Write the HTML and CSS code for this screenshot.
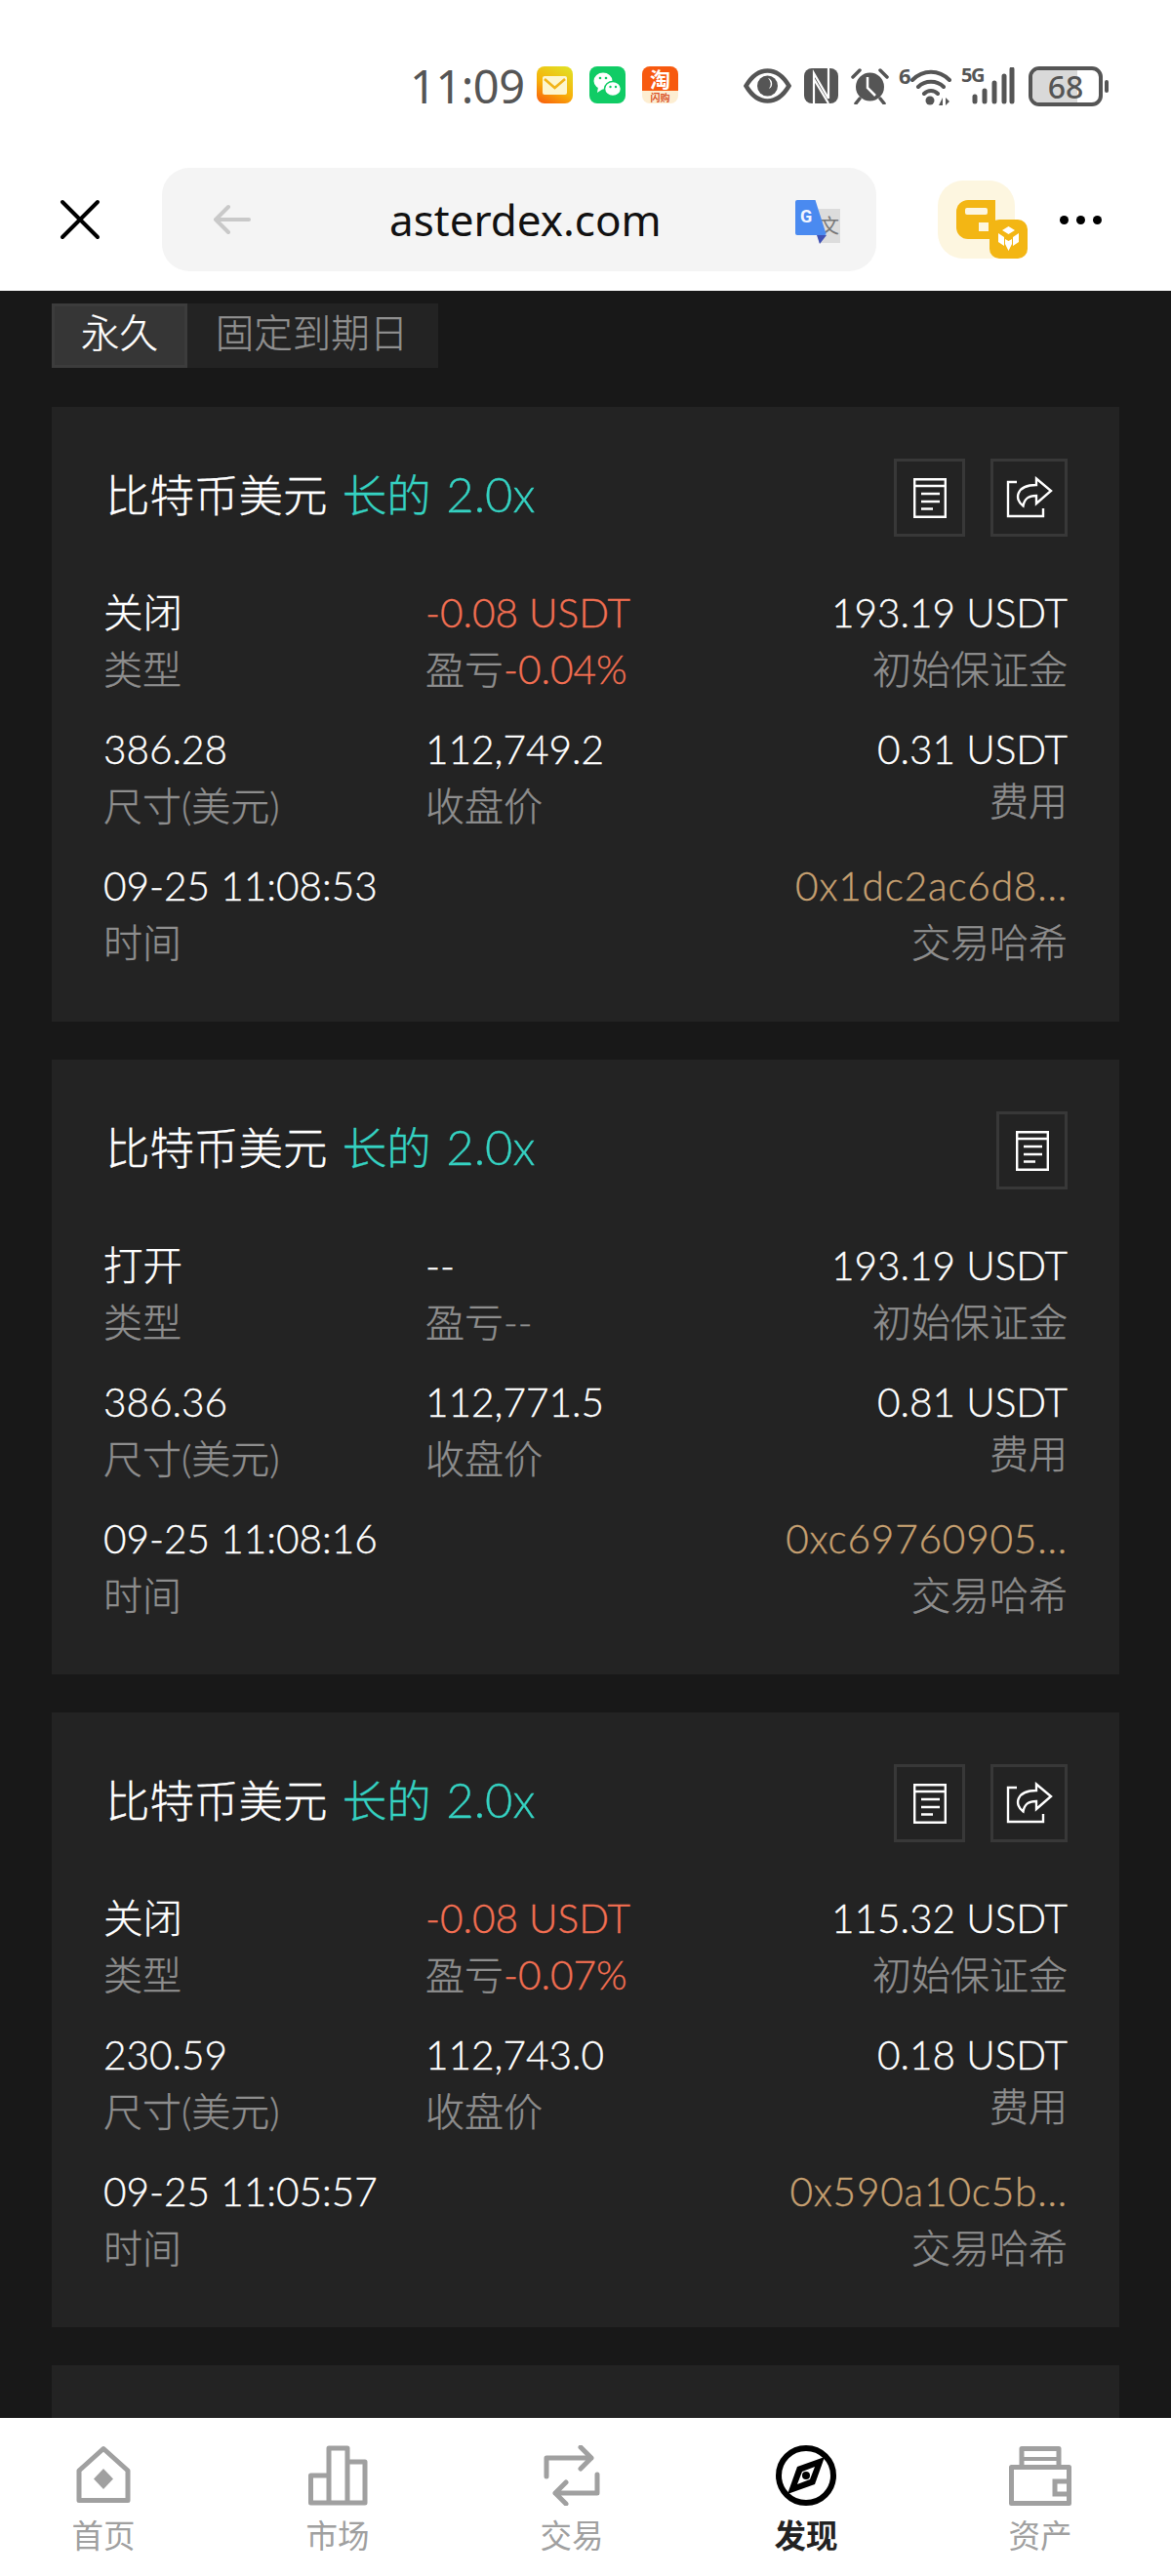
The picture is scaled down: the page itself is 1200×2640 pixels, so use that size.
FILE: index.html
```html
<!DOCTYPE html>
<html lang="zh">
<head>
<meta charset="utf-8">
<title>asterdex.com</title>
<link rel="stylesheet" href="styles.css">
</head>
<body>
<svg class="defs" width="0" height="0" aria-hidden="true">
  <symbol id="doc" viewBox="0 0 34 41">
    <path d="M1.2 1.2H32.8V39.8H1.2ZM1.2 8H32.8M8 16H27M8 24H27M8 31.5H20" fill="none" stroke="#fff" stroke-width="2.4"/>
  </symbol>
  <symbol id="share" viewBox="0 0 50 45">
    <path d="M12 6H3V41H39V33" fill="none" stroke="#fff" stroke-width="2.4"/>
    <path d="M32 2.5L47 15L32 28V20C25 20 20 22 18.5 30.5C9 24 11 9 32 9Z" fill="none" stroke="#fff" stroke-width="2.4" stroke-linejoin="miter"/>
  </symbol>
</svg>
<div class="app">
  <header class="chrome">
    <div class="status">
      <span class="clock">11:09</span>
      <div class="notifs">
        <svg class="notif" viewBox="0 0 37 38"><defs><linearGradient id="mailg" x1="0.7" y1="0" x2="0.2" y2="1"><stop offset="0" stop-color="#e3dc22"/><stop offset="0.55" stop-color="#f7b20a"/><stop offset="1" stop-color="#f9660c"/></linearGradient></defs><rect width="37" height="38" rx="8" fill="url(#mailg)"/><rect x="6" y="10" width="25" height="19" rx="2" fill="#fdf6cf"/><path d="M8 13L18.5 22L29 13" fill="none" stroke="#f1b41a" stroke-width="2.6"/></svg>
        <svg class="notif" viewBox="0 0 37 38"><rect width="37" height="38" rx="8" fill="#10cc65"/><ellipse cx="14" cy="15" rx="9.5" ry="8.5" fill="#fff"/><path d="M9 21L8 27L14 23Z" fill="#fff"/><ellipse cx="24" cy="23" rx="8.5" ry="7.5" fill="#fff" stroke="#10cc65" stroke-width="1.5"/><circle cx="11" cy="12" r="1.3" fill="#10cc65"/><circle cx="17" cy="12" r="1.3" fill="#10cc65"/><circle cx="21.500" cy="21" r="1.2" fill="#10cc65"/><circle cx="27" cy="21" r="1.2" fill="#10cc65"/></svg>
        <div class="taobao"><span class="tb-main">淘</span><span class="tb-sub">闪购</span></div>
      </div>
      <div class="sys">
        <svg class="sys-eye" viewBox="0 0 49 36"><path d="M2.500 18C9 7 16 2.500 24.500 2.500S40 7 46.500 18C40 29 33 33.500 24.500 33.500S9 29 2.500 18Z" fill="none" stroke="#555" stroke-width="4.500"/><circle cx="24.500" cy="18" r="10.500" fill="#555"/><path d="M25 10a6 6 0 0 1 1 11a8 8 0 0 0-1-11Z" fill="#fff"/></svg>
        <svg class="sys-nfc" viewBox="0 0 35 38"><rect y="1" width="35" height="36" rx="8" fill="#555"/><path d="M10 37V6L25 32M10 12L25 37M25 1V32" fill="none" stroke="#fff" stroke-width="2.200"/></svg>
        <svg class="sys-alarm" viewBox="0 0 39 38"><circle cx="19.500" cy="20" r="14.500" fill="#555"/><path d="M2 10L9 3M37 10L30 3M9 32L5 37M30 32L34 37" stroke="#555" stroke-width="3.500" stroke-linecap="round"/><path d="M17 10V21L25 29" fill="none" stroke="#fff" stroke-width="2.500"/></svg>
        <div class="wifi"><span class="wifi-num">6</span><svg class="wifi-svg" viewBox="0 0 42 38"><path d="M2 12C13 1 29 1 40 12M8 19C15 12 27 12 34 19M14 26C18 22 24 22 28 26" fill="none" stroke="#555" stroke-width="4" stroke-linecap="round"/><circle cx="20" cy="33" r="4.500" fill="#555"/><path d="M29 38L33 30V38ZM36 30L40 34L36 38Z" fill="#555"/></svg></div>
        <div class="signal"><span class="sig-label">5G</span><svg class="sig-svg" viewBox="0 0 46 38"><path d="M4 30V35M14 24V35M24 16V35M34 9V35M42 2V35" stroke="#555" stroke-width="5" stroke-linecap="round" transform="translate(-1 0)"/></svg></div>
        <div class="battery"><span class="bat-fill"></span><span class="bat-num">68</span></div>
        <span class="bat-nub"></span>
      </div>
    </div>
    <div class="toolbar">
      <svg class="close" viewBox="0 0 42 42"><path d="M3 3L39 39M39 3L3 39" stroke="#000" stroke-width="4" stroke-linecap="round"/></svg>
      <div class="urlbar">
        <svg class="back" viewBox="0 0 40 32"><path d="M37 16H3M16 3L3 16L16 29" fill="none" stroke="#c9c9c9" stroke-width="4" stroke-linecap="round" stroke-linejoin="round"/></svg>
        <span class="url">asterdex.com</span>
        <div class="gtrans">
          <span class="gt-back">文</span>
          <span class="gt-front">G</span>
          <span class="gt-fold"></span>
        </div>
      </div>
      <div class="miniapp">
        <svg class="mini-svg" viewBox="0 0 41 40"><path d="M12 0H40V40H12A12 12 0 0 1 0 28V12A12 12 0 0 1 12 0Z" fill="#f3b614"/><rect x="9" y="8" width="23" height="7" rx="2" fill="#fdf6e0"/><rect x="23" y="23" width="10" height="9" fill="#fdf6e0"/></svg>
        <svg class="mini-badge" viewBox="0 0 39 40"><rect width="39" height="40" rx="10" fill="#f3b614"/><path d="M19.500 7L26 11L19.500 15L13 11ZM9 14L15 18V27L9 23ZM30 14L24 18V27L30 23ZM16 20L19.500 22L23 20V25L19.500 32L16 25Z" fill="#fff"/></svg>
      </div>
      <div class="dots"><span class="dot"></span><span class="dot"></span><span class="dot"></span></div>
    </div>
  </header>

  <main class="content">
    <div class="tabs">
      <span class="tab tab-active">永久</span>
      <span class="tab tab-idle">固定到期日</span>
    </div>

    <article class="card">
      <div class="card-head">
        <h2 class="title">比特币美元 <span class="long">长的 <span class="lev">2.0x</span></span></h2>
        <div class="actions">
          <span class="btn"><svg class="ico-doc"><use href="#doc"/></svg></span>
          <span class="btn btn-share"><svg class="ico-share"><use href="#share"/></svg></span>
        </div>
      </div>
      <div class="grid">
        <div class="cell"><div class="val">关闭</div><div class="lab">类型</div></div>
        <div class="cell"><div class="val neg">-0.08 USDT</div><div class="lab">盈亏<span class="neg">-0.04%</span></div></div>
        <div class="cell end"><div class="val">193.19 USDT</div><div class="lab">初始保证金</div></div>
        <div class="cell"><div class="val">386.28</div><div class="lab">尺寸(美元)</div></div>
        <div class="cell"><div class="val">112,749.2</div><div class="lab">收盘价</div></div>
        <div class="cell end"><div class="val">0.31 USDT</div><div class="lab lab-tight">费用</div></div>
        <div class="cell"><div class="val">09-25 11:08:53</div><div class="lab">时间</div></div>
        <div class="cell"></div>
        <div class="cell end"><div class="val hash">0x1dc2ac6d8...</div><div class="lab">交易哈希</div></div>
      </div>
    </article>

    <article class="card">
      <div class="card-head">
        <h2 class="title">比特币美元 <span class="long">长的 <span class="lev">2.0x</span></span></h2>
        <div class="actions">
          <span class="btn"><svg class="ico-doc"><use href="#doc"/></svg></span>
        </div>
      </div>
      <div class="grid">
        <div class="cell"><div class="val">打开</div><div class="lab">类型</div></div>
        <div class="cell"><div class="val">--</div><div class="lab">盈亏--</div></div>
        <div class="cell end"><div class="val">193.19 USDT</div><div class="lab">初始保证金</div></div>
        <div class="cell"><div class="val">386.36</div><div class="lab">尺寸(美元)</div></div>
        <div class="cell"><div class="val">112,771.5</div><div class="lab">收盘价</div></div>
        <div class="cell end"><div class="val">0.81 USDT</div><div class="lab lab-tight">费用</div></div>
        <div class="cell"><div class="val">09-25 11:08:16</div><div class="lab">时间</div></div>
        <div class="cell"></div>
        <div class="cell end"><div class="val hash">0xc69760905...</div><div class="lab">交易哈希</div></div>
      </div>
    </article>

    <article class="card">
      <div class="card-head">
        <h2 class="title">比特币美元 <span class="long">长的 <span class="lev">2.0x</span></span></h2>
        <div class="actions">
          <span class="btn"><svg class="ico-doc"><use href="#doc"/></svg></span>
          <span class="btn btn-share"><svg class="ico-share"><use href="#share"/></svg></span>
        </div>
      </div>
      <div class="grid">
        <div class="cell"><div class="val">关闭</div><div class="lab">类型</div></div>
        <div class="cell"><div class="val neg">-0.08 USDT</div><div class="lab">盈亏<span class="neg">-0.07%</span></div></div>
        <div class="cell end"><div class="val">115.32 USDT</div><div class="lab">初始保证金</div></div>
        <div class="cell"><div class="val">230.59</div><div class="lab">尺寸(美元)</div></div>
        <div class="cell"><div class="val">112,743.0</div><div class="lab">收盘价</div></div>
        <div class="cell end"><div class="val">0.18 USDT</div><div class="lab lab-tight">费用</div></div>
        <div class="cell"><div class="val">09-25 11:05:57</div><div class="lab">时间</div></div>
        <div class="cell"></div>
        <div class="cell end"><div class="val hash">0x590a10c5b...</div><div class="lab">交易哈希</div></div>
      </div>
    </article>

    <article class="card card-empty"></article>
  </main>

  <nav class="nav">
    <div class="nav-item">
      <svg class="nav-ico" viewBox="0 0 64 62"><path d="M32 3.500L57 26V56.500H7V26Z" fill="none" stroke="#a0a0a0" stroke-width="5" stroke-linejoin="round"/><path d="M32 24L42 34.500L32 45L22 34.500Z" fill="#a0a0a0"/></svg>
      <span class="nav-lab">首页</span>
    </div>
    <div class="nav-item">
      <svg class="nav-ico" viewBox="0 0 64 62"><path d="M4.500 59V31H23V3H42V17H60V59ZM23 31V59M42 17V59" fill="none" stroke="#a0a0a0" stroke-width="5" stroke-linejoin="round"/></svg>
      <span class="nav-lab">市场</span>
    </div>
    <div class="nav-item">
      <svg class="nav-ico" viewBox="0 0 64 62"><path d="M6 33V14H52M41 3L52 14L41 25M58 31V50H15M26 39L15 50L26 61" fill="none" stroke="#a0a0a0" stroke-width="5" stroke-linecap="round" stroke-linejoin="round" transform="translate(0 -1)"/></svg>
      <span class="nav-lab">交易</span>
    </div>
    <div class="nav-item">
      <svg class="nav-ico" viewBox="0 0 64 62"><circle cx="32" cy="31" r="28" fill="none" stroke="#000" stroke-width="6"/><path d="M51 12L41 40L13 50L23 22Z" fill="#000"/><path d="M41 22L36 35L23 40L28 27Z" fill="#fff"/><circle cx="32" cy="31" r="4" fill="#000"/></svg>
      <span class="nav-lab nav-lab-on">发现</span>
    </div>
    <div class="nav-item">
      <svg class="nav-ico" viewBox="0 0 64 62"><path d="M13 21V3.500H51V21" fill="none" stroke="#a0a0a0" stroke-width="5" stroke-linejoin="round"/><path d="M13 14H51" stroke="#a0a0a0" stroke-width="4"/><path d="M2.500 22.500H61.500V59.500H2.500Z" fill="none" stroke="#a0a0a0" stroke-width="5" stroke-linejoin="round"/><path d="M61 37H47V50H61" fill="none" stroke="#a0a0a0" stroke-width="5"/></svg>
      <span class="nav-lab">资产</span>
    </div>
  </nav>
</div>
</body>
</html>
```
FILE: styles.css
```css
* { box-sizing: border-box; }
html, body { margin: 0; padding: 0; }
body {
  font-family: "Lato", "Noto Sans CJK SC", sans-serif;
  font-weight: 300;
  background: #fff;
  color: #fff;
}
.defs { display: block; width: 0; height: 0; }
.app { display: flex; flex-direction: column; height: 100vh; overflow: hidden; }

/* browser chrome */
.chrome { height: 298px; flex: none; background: #fff; }
.status {
  height: 172px;
  padding: 67px 0 0 420px;
  display: flex;
  align-items: flex-start;
}
.clock {
  font-family: "Noto Sans", sans-serif;
  font-weight: 400;
  font-size: 47px;
  line-height: 42px;
  color: #555;
  width: 130px;
  letter-spacing: -0.5px;
}
.notifs { display: flex; gap: 17px; height: 40px; align-items: center; }
.notif { width: 37px; height: 38px; display: block; }
.taobao {
  width: 37px;
  height: 38px;
  border-radius: 8px;
  display: flex;
  flex-direction: column;
  background: #fdeed2;
}
.tb-main {
  height: 25px;
  background: #f7590f;
  border-radius: 8px 8px 0 0;
  color: #fff;
  font: 700 21px/25px "Noto Sans CJK SC", sans-serif;
  text-align: center;
}
.tb-sub {
  font: 700 10px/13px "Noto Sans CJK SC", sans-serif;
  color: #d9542b;
  text-align: center;
}
.sys { display: flex; align-items: center; margin-left: 67px; height: 42px; }
.sys-eye { width: 49px; height: 36px; display: block; }
.sys-nfc { width: 35px; height: 38px; margin-left: 13px; display: block; }
.sys-alarm { width: 39px; height: 38px; margin-left: 13px; display: block; }
.wifi { width: 53px; height: 40px; margin-left: 11px; position: relative; }
.wifi-num {
  position: absolute;
  left: -1px;
  top: -3px;
  font: 700 22px/24px "Noto Sans", sans-serif;
  color: #555;
}
.wifi-svg { position: absolute; left: 11px; top: 2px; width: 42px; height: 38px; }
.signal { width: 57px; height: 40px; margin-left: 10px; position: relative; }
.sig-label {
  position: absolute;
  left: 0;
  top: -2px;
  font: 700 20px/22px "Noto Sans", sans-serif;
  color: #555;
  letter-spacing: -1.5px;
}
.sig-svg { position: absolute; right: 0; top: 1px; width: 46px; height: 38px; }
.battery {
  width: 76px;
  height: 41px;
  margin-left: 12px;
  border: 4px solid #555;
  border-radius: 11px;
  position: relative;
  display: flex;
  align-items: center;
  justify-content: center;
  background: #fff;
}
.bat-fill {
  position: absolute;
  left: 0;
  top: 0;
  bottom: 0;
  width: 68%;
  background: #d9d9d9;
  border-radius: 7px 0 0 7px;
}
.bat-num {
  position: relative;
  font: 500 32px/33px "Noto Sans", sans-serif;
  color: #555;
}
.bat-nub { width: 4px; height: 13px; margin-left: 2px; background: #555; border-radius: 2px; }

.toolbar { height: 106px; display: flex; align-items: center; position: relative; }
.close { width: 42px; height: 42px; margin-left: 61px; flex: none; display: block; }
.urlbar {
  margin-left: 63px;
  width: 732px;
  height: 106px;
  background: #f4f4f4;
  border-radius: 28px;
  display: flex;
  align-items: center;
  flex: none;
  position: relative;
}
.back { width: 40px; height: 32px; margin-left: 52px; display: block; flex: none; }
.url {
  margin-left: 141px;
  font-family: "Noto Sans", sans-serif;
  font-weight: 400;
  font-size: 44px;
  color: #111;
}
.gtrans { position: absolute; left: 649px; top: 33px; width: 46px; height: 46px; }
.gt-back {
  position: absolute;
  right: 0;
  top: 9px;
  width: 22px;
  height: 35px;
  background: #dcdcdc;
  color: #777;
  font: 400 20px/34px "Noto Sans CJK SC", sans-serif;
  text-align: center;
}
.gt-front {
  position: absolute;
  left: 0;
  top: 0;
  width: 32px;
  height: 36px;
  background: #4a8af0;
  color: #f2f6ff;
  border-radius: 2px;
  clip-path: polygon(0 0, 64% 0, 100% 100%, 0 100%);
  font: 700 18px/34px "Roboto", sans-serif;
  text-align: left;
  padding-left: 5px;
}
.gt-fold {
  position: absolute;
  left: 22px;
  top: 36px;
  width: 10px;
  height: 9px;
  background: #3f51b5;
  clip-path: polygon(0 0, 100% 0, 30% 100%);
}
.miniapp {
  position: relative;
  margin-left: 63px;
  width: 79px;
  height: 80px;
  background: #fdf6e0;
  border-radius: 26px;
  flex: none;
}
.mini-svg { position: absolute; left: 19px; top: 20px; width: 41px; height: 40px; }
.mini-badge { position: absolute; left: 53px; top: 40px; width: 39px; height: 40px; }
.dots { display: flex; gap: 8px; margin-left: 46px; }
.dot { width: 9px; height: 9px; border-radius: 50%; background: #000; }

/* dark page */
.content {
  flex: 1;
  min-height: 0;
  overflow: hidden;
  background: #181818;
  padding: 13px 53px 0;
}
.tabs { display: flex; width: 396px; height: 66px; background: #232323; margin-bottom: 40px; }
.tab { font-size: 39.500px; text-align: center; -webkit-text-stroke: 0.3px currentColor; }
.tab-active {
  width: 139px;
  background: #363636;
  border: 3px solid #3c3c3c;
  color: #fff;
  line-height: 54px;
}
.tab-idle { flex: 1; color: #909090; line-height: 60px; padding-right: 2px; }

.card {
  height: 630px;
  background: #232323;
  margin-bottom: 39px;
  padding: 53px 53px 0 53px;
}
.card-head { display: flex; justify-content: space-between; align-items: center; height: 80px; }
.title {
  margin: 0 0 6px 2px;
  font-size: 45.500px;
  font-weight: 300;
  line-height: 74px;
  color: #fff;
  word-spacing: 3px;
  -webkit-text-stroke: 0.35px currentColor;
}
.long { color: #35d2c2; }
.lev { font-size: 49px; }
.actions { display: flex; gap: 26px; }
.btn {
  width: 73px;
  height: 80px;
  border: 3px solid #383838;
  display: flex;
  align-items: center;
  justify-content: center;
}
.btn-share { width: 79px; }
.ico-doc { width: 34px; height: 41px; display: block; }
.ico-share { width: 50px; height: 45px; display: block; }

.grid {
  margin-top: 49px;
  display: grid;
  grid-template-columns: 330px 1fr auto;
  row-gap: 24px;
}
.cell { min-width: 0; }
.end { text-align: right; }
.val, .lab { line-height: 58px; white-space: nowrap; -webkit-text-stroke: 0.35px currentColor; }
.val { color: #fff; font-size: 40.600px; }
.lab { color: #8e8e8e; font-size: 40px; }
.lab .neg { font-size: 40.600px; }
.lab-tight { margin-top: -5px; }
.neg { color: #f26f52; }
.hash { color: #c6a071; letter-spacing: 0.8px; }

/* bottom nav */
.nav {
  height: 162px;
  flex: none;
  background: #fff;
  display: flex;
  gap: 160px;
  padding: 28px 0 0 66px;
}
.nav-item { width: 80px; display: flex; flex-direction: column; align-items: center; }
.nav-ico { width: 64px; height: 62px; display: block; flex: none; }
.nav-lab {
  margin-top: 9px;
  font: 400 32.500px/40px "Noto Sans CJK SC", sans-serif;
  color: #a0a0a0;
}
.nav-lab-on { font-weight: 700; color: #222; }
```
